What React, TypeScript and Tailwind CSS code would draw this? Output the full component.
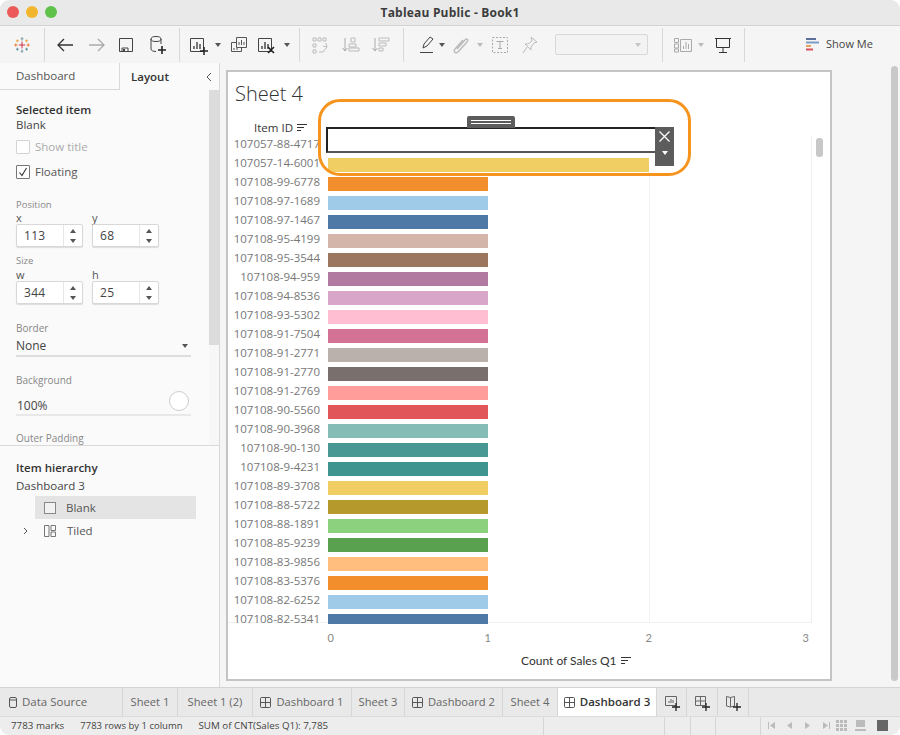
import React from "react";

const rows: [string, string][] = [
  ["107057-88-4717", "#ffffff"],
  ["107057-14-6001", "#f1ce63"],
  ["107108-99-6778", "#f28e2b"],
  ["107108-97-1689", "#a0cbe8"],
  ["107108-97-1467", "#4e79a7"],
  ["107108-95-4199", "#d4b5a9"],
  ["107108-95-3544", "#9d7660"],
  ["107108-94-959", "#b07aa1"],
  ["107108-94-8536", "#d7a6c9"],
  ["107108-93-5302", "#ffbed2"],
  ["107108-91-7504", "#d37295"],
  ["107108-91-2771", "#bab0ac"],
  ["107108-91-2770", "#79706e"],
  ["107108-91-2769", "#ff9d9a"],
  ["107108-90-5560", "#e15759"],
  ["107108-90-3968", "#86bcb6"],
  ["107108-90-130", "#499894"],
  ["107108-9-4231", "#3f9490"],
  ["107108-89-3708", "#f1ce63"],
  ["107108-88-5722", "#b6992d"],
  ["107108-88-1891", "#8cd17d"],
  ["107108-85-9239", "#59a14f"],
  ["107108-83-9856", "#ffbe7d"],
  ["107108-83-5376", "#f28e2b"],
  ["107108-82-6252", "#a0cbe8"],
  ["107108-82-5341", "#4e79a7"],
];

const Sep = ({ cls }: { cls: string }) => <div className={`w-px h-[34px] bg-[#d8d8d8] ${cls}`} />;

const Caret = ({ c = "#555" }: { c?: string }) => (
  <svg width="6" height="4" viewBox="0 0 6 4"><path d="M0 0h6L3 4z" fill={c} /></svg>
);

const SortIcon = () => (
  <svg width="10" height="10" viewBox="0 0 10 10" fill="none" stroke="#333" strokeWidth="1.2">
    <path d="M0 1.5h10M0 4.5h7M0 7.5h4" />
  </svg>
);

const Ic = ({ w = 20, children }: { w?: number; children: React.ReactNode }) => (
  <svg width={w} height="20" viewBox={`0 0 ${w} 20`} fill="none" strokeWidth="1" className="shrink-0">
    {children}
  </svg>
);

const Spinner = ({ value, cls }: { value: string; cls: string }) => (
  <div className={`h-[23px] flex items-center justify-between bg-white border border-[#d8d8d8] rounded-[2px] shadow-[0_1px_1px_rgba(0,0,0,0.12)] ${cls}`}>
    <span className="pl-[7px] text-[12px] text-[#444] tracking-[0.3px]">{value}</span>
    <div className="w-[19px] h-full border-l border-[#e6e6e6] flex flex-col items-center justify-center gap-[6px]">
      <span className="rotate-180 flex"><Caret /></span>
      <Caret />
    </div>
  </div>
);

const Tab = ({ w, label, grid, active }: { w: number; label: string; grid?: boolean; active?: boolean }) => (
  <div
    style={{ width: w }}
    className={`h-full shrink-0 flex items-center justify-center gap-[5px] border-r border-[#d6d6d6] ${active ? "bg-white font-semibold text-[#333] text-[11.5px]" : "text-[#666] text-[11.2px]"}`}
  >
    {grid && (
      <svg width="11" height="11" viewBox="0 0 11 11" fill="none" stroke="#555">
        <rect x="0.5" y="0.5" width="10" height="10" rx="1" />
        <path d="M5.5 0.5v10M0.5 5.5h10" />
      </svg>
    )}
    {label}
  </div>
);

export default function App() {
  return (
    <div className="w-[900px] h-[735px] bg-white flex flex-col overflow-hidden rounded-[9px] text-[#333] font-['Open_Sans','Liberation_Sans',sans-serif]">
      {/* title bar */}
      <div className="relative h-[26px] shrink-0 bg-[#e9e9e9] border-b border-[#d4d4d4] flex items-center justify-center">
        <div className="absolute left-[7px] top-[6px] flex gap-[7px]">
          <span className="w-3 h-3 rounded-full bg-[#ec5a57]" />
          <span className="w-3 h-3 rounded-full bg-[#f2b52e]" />
          <span className="w-3 h-3 rounded-full bg-[#5fc24a]" />
        </div>
        <span className="text-[12px] font-bold text-[#3c3c3c] tracking-[0.2px]">Tableau Public - Book1</span>
      </div>

      {/* toolbar */}
      <div className="h-[37px] shrink-0 bg-[#f5f5f5] flex items-center">
        <div className="w-[44px] h-full flex items-center justify-center">
          <svg width="16" height="16" viewBox="0 0 16 16" strokeWidth="0.9" fill="none">
            <path d="M8 0v3.600M6.600 1.800h2.800M8 12.400V16M6.600 14.200h2.800" stroke="#7199a6" />
            <path d="M1.800 6.400v3.200M.2 8h3.200M14.200 6.400v3.200M12.600 8h3.200" stroke="#e8762c" />
            <path d="M8 4.600v6.800M4.800 8h6.400" stroke="#c72035" />
            <path d="M3.400 2.400v2.800M2 3.800h2.800M12.600 2.400v2.800M11.200 3.800H14" stroke="#e8a03c" />
            <path d="M3.400 10.800v2.800M2 12.200h2.800M12.600 10.800v2.800M11.200 12.200H14" stroke="#59879b" />
          </svg>
        </div>
        <Sep cls="" />
        <div className="flex items-center ml-[10px]">
          <Ic>
            <path d="M18 10H3M9 4l-6 6 6 6" stroke="#333" strokeWidth="1.300" />
          </Ic>
          <span className="ml-[12px] flex">
            <Ic><path d="M2 10h15M11 4l6 6-6 6" stroke="#aaa" strokeWidth="1.300" /></Ic>
          </span>
          <span className="ml-[9px] flex">
            <Ic><path d="M3.500 3.500h13v13h-13zM6 16v-3h6v3" stroke="#444" /><rect x="7" y="14" width="2" height="2" fill="#444" /></Ic>
          </span>
          <span className="ml-[13px] flex">
            <Ic w={18}>
              <ellipse cx="7" cy="4" rx="5" ry="2.500" stroke="#444" />
              <path d="M2 4v10c0 1.500 2 2.500 5 2.500M12 4v5" stroke="#444" />
              <path d="M13 11v8M9 15h8" stroke="#222" strokeWidth="1.600" />
            </Ic>
          </span>
        </div>
        <Sep cls="ml-[12px]" />
        <div className="flex items-center ml-[10px]">
          <Ic>
            <path d="M.5 3.500h13v13H.5z" stroke="#444" />
            <path d="M4 14v-3M7 14V7M10 14v-5" stroke="#333" strokeWidth="1.300" />
            <path d="M14 12v8M10 16h8" stroke="#222" strokeWidth="1.500" />
          </Ic>
          <span className="ml-[5px] flex"><Caret /></span>
          <span className="ml-[8px] flex">
            <Ic>
              <path d="M7.500 2.500h10v10h-10zM2.500 7.500h5M2.500 7.500v9h10v-4" stroke="#555" />
              <path d="M10 10V7M12.500 10V5M15 10V7M5 15v-2M8 15v-2" stroke="#555" />
            </Ic>
          </span>
          <span className="ml-[7px] flex">
            <Ic>
              <path d="M2.500 3.500h13v13h-13z" stroke="#444" />
              <path d="M6 14v-3M9 14V7M12 14v-5" stroke="#333" strokeWidth="1.300" />
              <path d="M12 12l6 6M18 12l-6 6" stroke="#222" strokeWidth="1.600" />
            </Ic>
          </span>
          <span className="ml-[8px] flex"><Caret /></span>
        </div>
        <Sep cls="ml-[9px]" />
        <div className="flex items-center ml-[10px]">
          <Ic>
            <path d="M3 3h3v3H3zM8 3h3v3H8zM13 3h3v3h-3zM3 9h3v3H3zM3 15h3v3H3zM9 17h4l4-5M16 8l1 4-4-1" stroke="#bbb" />
          </Ic>
          <span className="ml-[10px] flex">
            <Ic>
              <path d="M5 3v13M2.500 13l2.500 3 2.500-3" stroke="#aaa" />
              <path d="M11 3h4v4h-4zM9 9h7v3H9zM9 13h10v3H9z" stroke="#bbb" />
            </Ic>
          </span>
          <span className="ml-[10px] flex">
            <Ic>
              <path d="M5 3v13M2.500 13l2.500 3 2.500-3" stroke="#aaa" />
              <path d="M9 3h10v3H9zM9 8h7v3H9zM9 13h4v3H9z" stroke="#bbb" />
            </Ic>
          </span>
        </div>
        <Sep cls="ml-[13px]" />
        <div className="flex items-center ml-[14px]">
          <Ic>
            <path d="M5 13l1-4 6-7 3 2-6 7zM2 17.500h13" stroke="#444" />
          </Ic>
          <span className="ml-[1px] flex"><Caret /></span>
          <span className="ml-[6px] flex">
            <Ic>
              <path d="M6 14l8-9c2-2 4 0 2 2l-9 10c-3 2-5-1-3-3l8-9" stroke="#bbb" strokeWidth="1.400" />
            </Ic>
          </span>
          <span className="ml-[6px] flex"><Caret c="#bbb" /></span>
          <span className="ml-[7px] flex">
            <Ic>
              <rect x="2.500" y="2.500" width="15" height="15" stroke="#aaa" strokeDasharray="2 1.500" />
              <path d="M6.500 6.500h7M10 6.500v7M8 13.500h4" stroke="#aaa" />
            </Ic>
          </span>
          <span className="ml-[10px] flex">
            <Ic>
              <path d="M11 2l6 5-3 1-3 4 0 3-6-6 3 0 4-3zM7 12l-4 6" stroke="#bbb" />
            </Ic>
          </span>
        </div>
        <div className="ml-[15px] w-[93px] h-[21px] bg-[#f3f3f3] border border-[#d8d8d8] rounded-[2px] flex items-center justify-end pr-[6px]">
          <Caret c="#c4c4c4" />
        </div>
        <Sep cls="ml-[14px]" />
        <div className="flex items-center ml-[9px]">
          <Ic>
            <path d="M2.500 3.500h4v4h-4zM2.500 9h4v4h-4zM2.500 14h4v3h-4zM8.500 4.500h11v12h-11z" stroke="#aaa" />
            <path d="M11.500 14v-3M14 14V7M16.500 14v-5" stroke="#aaa" />
          </Ic>
          <span className="ml-[6px] flex"><Caret c="#bbb" /></span>
          <span className="ml-[9px] flex">
            <Ic>
              <path d="M2 3.500h16M3.500 3.500v9h13v-9M10 12.500v5M6 17.500h8" stroke="#333" />
            </Ic>
          </span>
        </div>
        <Sep cls="ml-[11px]" />
        <div className="flex items-center ml-[61px] gap-[6px]">
          <svg width="14" height="16" viewBox="0 0 14 16" className="shrink-0">
            <rect x="0" y="1" width="10" height="2" fill="#5b6f9d" />
            <rect x="0" y="4.500" width="13" height="2" fill="#7d9ec4" />
            <rect x="0" y="8" width="5" height="2" fill="#e8a15b" />
            <rect x="0" y="11.500" width="7" height="2" fill="#d9535a" />
          </svg>
          <span className="text-[11px] text-[#444]">Show Me</span>
        </div>
      </div>

      {/* main */}
      <div className="flex-1 min-h-0 flex bg-[#f5f5f5]">
        {/* left panel */}
        <div className="w-[220px] shrink-0 bg-[#fafafa] border-r border-[#d9d9d9] flex flex-col">
          <div className="h-[27px] flex shrink-0 text-[11.5px]">
            <div className="w-[120px] border-b border-r border-[#d9d9d9] flex items-center pl-[16px] text-[#555]">Dashboard</div>
            <div className="w-[79px] flex items-center pl-[11px] font-semibold text-[#333]">Layout</div>
            <div className="flex-1 flex items-center justify-center">
              <svg width="6" height="10" viewBox="0 0 6 10" fill="none" stroke="#555"><path d="M5 1L1 5l4 4" /></svg>
            </div>
          </div>
          <div className="h-[356px] shrink-0 flex border-b border-[#d9d9d9]">
            <div className="w-[209px] overflow-hidden pl-[16px] pr-[18px] pt-[12px]">
              <div className="text-[11.5px] font-semibold leading-[15px] text-[#333]">Selected item</div>
              <div className="text-[11.5px] leading-[15px] text-[#444]">Blank</div>
              <div className="mt-[7px] flex items-center gap-[5px] h-[15px]">
                <span className="w-[14px] h-[14px] border border-[#d4d4d4] bg-white rounded-[1px]" />
                <span className="text-[11.5px] text-[#aaa]">Show title</span>
              </div>
              <div className="mt-[10px] flex items-center gap-[5px] h-[15px]">
                <span className="w-[14px] h-[14px] border border-[#777] bg-white rounded-[1px] flex items-center justify-center">
                  <svg width="10" height="10" viewBox="0 0 10 10" fill="none" stroke="#333" strokeWidth="1.100"><path d="M1.500 5.500l2.500 3L8.500 1" /></svg>
                </span>
                <span className="text-[11.5px] text-[#555]">Floating</span>
              </div>
              <div className="mt-[20px] text-[9.5px] leading-[12px] text-[#888]">Position</div>
              <div className="flex gap-[9px] text-[11px] leading-[13px] text-[#555]">
                <div className="w-[67px]">x</div>
                <div>y</div>
              </div>
              <div className="flex gap-[9px]">
                <Spinner value="113" cls="w-[67px]" />
                <Spinner value="68" cls="w-[67px]" />
              </div>
              <div className="mt-[8px] text-[9.5px] leading-[12px] text-[#888]">Size</div>
              <div className="flex gap-[9px] text-[11px] leading-[13px] text-[#555] mt-[1px]">
                <div className="w-[67px]">w</div>
                <div>h</div>
              </div>
              <div className="flex gap-[9px]">
                <Spinner value="344" cls="w-[67px]" />
                <Spinner value="25" cls="w-[67px]" />
              </div>
              <div className="mt-[18px] text-[10px] leading-[13px] text-[#888]">Border</div>
              <div className="mt-[1px] h-[21px] flex items-center justify-between border-b-2 border-[#dedede] pr-[3px] text-[12px] text-[#444]">
                <span>None</span>
                <Caret c="#555" />
              </div>
              <div className="mt-[17px] text-[10px] leading-[13px] text-[#888]">Background</div>
              <div className="mt-[3px] h-[26px] flex items-center justify-between border-b-2 border-[#e8e8e8] pl-[1px] text-[12px] text-[#444]">
                <span className="pt-[7px]">100%</span>
                <span className="w-[20px] h-[20px] mr-[2px] -mt-[3px] rounded-full bg-white border border-[#ccc]" />
              </div>
              <div className="mt-[16px] text-[10px] leading-[13px] text-[#888]">Outer Padding</div>
            </div>
            <div className="w-[10px] bg-[#f7f7f7] shrink-0">
              <div className="h-[255px] bg-[#dcdcdc]" />
            </div>
          </div>
          <div className="pl-[16px] pt-[14px] pr-[23px]">
            <div className="text-[11.5px] font-semibold leading-[16px] text-[#333]">Item hierarchy</div>
            <div className="text-[11.5px] leading-[18px] text-[#444] mt-[1px]">Dashboard 3</div>
            <div className="ml-[19px] mt-[1px] h-[23px] bg-[#e4e4e4] flex items-center pl-[9px] gap-[10px] text-[11.5px] text-[#555]">
              <span className="w-[12px] h-[12px] border border-[#888] bg-[#f2f2f2]" />
              Blank
            </div>
            <div className="h-[23px] flex items-center text-[11.5px] text-[#555]">
              <span className="w-[28px] pl-[7px] flex">
                <svg width="5" height="8" viewBox="0 0 5 8" fill="none" stroke="#555"><path d="M1 1l3 3-3 3" /></svg>
              </span>
              <svg width="12" height="12" viewBox="0 0 12 12" fill="none" stroke="#777" className="shrink-0">
                <path d="M.5.500h4.500v11H.5zM7 .500h4.500v5H7zM7 7h4.500v4.500H7z" />
              </svg>
              <span className="ml-[11px]">Tiled</span>
            </div>
          </div>
        </div>

        {/* canvas */}
        <div className="flex-1 min-w-0 flex">
          <div className="flex-1 min-w-0 pl-[6px] pt-[7px] pr-[56px] pb-[6px]">
            <div className="relative h-full bg-white border-2 border-[#c4c4c4] overflow-hidden">
              <div className="text-[20px] leading-[24px] text-[#333] pl-[7px] pt-[10px] font-light">Sheet 4</div>
              <div className="mt-[15px] w-[79px] flex justify-end items-center gap-[4px] text-[11.5px] h-[14px] text-[#333]">
                Item ID <SortIcon />
              </div>
              <div className="flex pt-px">
                {/* chart */}
                <div className="relative flex-1 h-[487px] border-b border-[#f2f2f2] flex flex-col">
                  {rows.map(([id, c], i) => (
                    <div key={id} className="h-[19px] flex items-center shrink-0">
                      <div className="w-[92px] -mt-[3px] text-right text-[11.5px] text-[#777] whitespace-nowrap flex justify-end">
                        {id}
                      </div>
                      <div
                        style={{
                          background: c,
                          width: id === "107057-14-6001" ? 321 : 160,
                        }}
                        className={i === rows.length - 1 ? "h-[10px] ml-[8px] self-start mt-[3px]" : "h-[14px] ml-[8px]"}
                      />
                    </div>
                  ))}
                  <span className="absolute left-[421px] top-[36px] bottom-0 w-px bg-[#f2f2f2]" />
                </div>
                <div className="w-[15px] h-[487px] flex justify-center shrink-0 mr-[4px] border-l border-[#efefef]">
                  <div className="w-[7px] h-[19px] mt-[2px] rounded-[3px] bg-[#c8c8c8]" />
                </div>
              </div>
              <div className="mt-[7px] h-[16px] flex text-[11px] leading-[16px] text-[#888] font-['Lato','Open_Sans',sans-serif]">
                <div className="w-[106px] text-right">0</div>
                <div className="w-[157px] text-right">1</div>
                <div className="w-[161px] text-right">2</div>
                <div className="w-[157px] text-right">3</div>
              </div>
              <div className="mt-[7px] ml-[293px] flex items-center gap-[4px] text-[12px] leading-[16px] text-[#333] font-['Lato','Open_Sans',sans-serif]">
                Count of Sales Q1 <SortIcon />
              </div>

              {/* floating selection */}
              <div className="absolute left-[98px] top-[55px] w-[330px] h-[26px] border-2 border-[#222] border-b-[#555] border-r-0 bg-white" />
              <div className="absolute left-[239px] top-[44px] w-[48px] h-[12px] bg-[#5c5c5c] rounded-t-[2px] flex flex-col items-center justify-center gap-[2px]">
                <span className="w-[40px] h-px bg-white" />
                <span className="w-[40px] h-px bg-white" />
              </div>
              <div className="absolute left-[427px] top-[55px] w-[19px] h-[39px] bg-[#5c5c5c] flex flex-col items-center">
                <svg width="13" height="13" viewBox="0 0 13 13" fill="none" stroke="#fff" strokeWidth="1.300" className="mt-[3px]">
                  <path d="M1.500 1.500l10 10M11.500 1.500l-10 10" />
                </svg>
                <span className="mt-[8px] flex"><Caret c="#fff" /></span>
              </div>
              <div className="absolute left-[90px] top-[27px] w-[373px] h-[77px] border-[3px] border-[#f7941d] rounded-[22px]" />
            </div>
          </div>
          <div className="w-[12px] shrink-0 bg-[#f5f5f5]">
            <div className="w-[7px] ml-[3px] mt-[3px] h-[615px] rounded-[4px] bg-[#c9c9c9]" />
          </div>
        </div>
      </div>

      {/* tab bar */}
      <div className="h-[29px] shrink-0 bg-[#e9e9e9] border-t border-[#d4d4d4] flex items-center">
        <div className="w-[123px] h-full shrink-0 flex items-center pl-[9px] gap-[5px] border-r border-[#d6d6d6] text-[11.5px] text-[#666]">
          <svg width="8" height="11" viewBox="0 0 8 11" fill="none" stroke="#555"><rect x=".5" y=".5" width="7" height="10" rx="1.500" /><path d="M.5 3h7" /></svg>
          Data Source
        </div>
        <Tab w={55} label="Sheet 1" />
        <Tab w={75} label="Sheet 1 (2)" />
        <Tab w={99} label="Dashboard 1" grid />
        <Tab w={53} label="Sheet 3" />
        <Tab w={98} label="Dashboard 2" grid />
        <Tab w={55} label="Sheet 4" />
        <Tab w={99} label="Dashboard 3" grid active />
        <div className="w-[30px] h-full flex items-center justify-center border-r border-[#d6d6d6]">
          <Ic>
            <path d="M3.500 4.500h11v9h-11z" stroke="#666" />
            <path d="M7 11V9M9 11V7M11 11V8" stroke="#666" />
            <path d="M14 11v8M10 15h8" stroke="#222" strokeWidth="1.300" />
          </Ic>
        </div>
        <div className="w-[31px] h-full flex items-center justify-center border-r border-[#d6d6d6]">
          <Ic>
            <path d="M3.500 4.500h10v9h-10zM8.500 4.500v9M3.500 9h10" stroke="#666" />
            <path d="M14 11v8M10 15h8" stroke="#222" strokeWidth="1.300" />
          </Ic>
        </div>
        <div className="w-[31px] h-full flex items-center justify-center border-r border-[#d6d6d6]">
          <Ic>
            <path d="M3.500 4.500l4 1 4-1v9.500l-4 1-4-1zM7.500 5.500v9.500" stroke="#666" />
            <path d="M14 11v8M10 15h8" stroke="#222" strokeWidth="1.300" />
          </Ic>
        </div>
      </div>

      {/* status bar */}
      <div className="h-[19px] shrink-0 bg-[#ededed] border-t border-[#dcdcdc] flex items-center text-[9.8px] text-[#444] relative">
        <span className="ml-[11px]">7783 marks</span>
        <span className="ml-[16px] text-[9.5px]">7783 rows by 1 column</span>
        <span className="ml-[16px]">SUM of CNT(Sales Q1): 7,785</span>
        <span className="absolute left-[543px] top-0 h-full border-l border-[#d6d6d6]" />
        <span className="absolute left-[664px] top-0 h-full border-l border-[#d6d6d6]" />
        <span className="absolute left-[690px] top-0 h-full border-l border-[#d6d6d6]" />
        <span className="absolute left-[715px] top-0 h-full border-l border-[#d6d6d6]" />
        <span className="absolute left-[760px] top-0 h-full border-l border-[#d6d6d6]" />
        <div className="absolute left-[768px] top-[5px] flex items-center gap-[8px]">
          <svg width="7" height="7" viewBox="0 0 7 7" fill="#bbb"><path d="M7 0v7L2 3.500zM0 0h1v7H0z" /></svg>
          <svg width="5" height="7" viewBox="0 0 5 7" fill="#bbb" className="ml-[4px]"><path d="M5 0v7L0 3.500z" /></svg>
          <svg width="5" height="7" viewBox="0 0 5 7" fill="#bbb" className="ml-[5px]"><path d="M0 0v7l5-3.500z" /></svg>
          <svg width="7" height="7" viewBox="0 0 7 7" fill="#bbb" className="ml-[5px]"><path d="M0 0v7l5-3.500zM6 0h1v7H6z" /></svg>
        </div>
        <div className="absolute left-[836px] top-[3px] flex items-center gap-[8px]">
          <svg width="11" height="11" viewBox="0 0 11 11" fill="#bbb">
            <path d="M0 0h3v3H0zM4 0h3v3H4zM8 0h3v3H8zM0 4h3v3H0zM4 4h3v3H4zM8 4h3v3H8zM0 8h3v3H0zM4 8h3v3H4zM8 8h3v3H8z" />
          </svg>
          <svg width="11" height="11" viewBox="0 0 11 11" fill="#bbb"><path d="M1 0h9v7H1zM0 9h11v2H0z" /></svg>
          <span className="ml-[3px] w-[11px] h-[11px] bg-[#666]" />
        </div>
      </div>
    </div>
  );
}
